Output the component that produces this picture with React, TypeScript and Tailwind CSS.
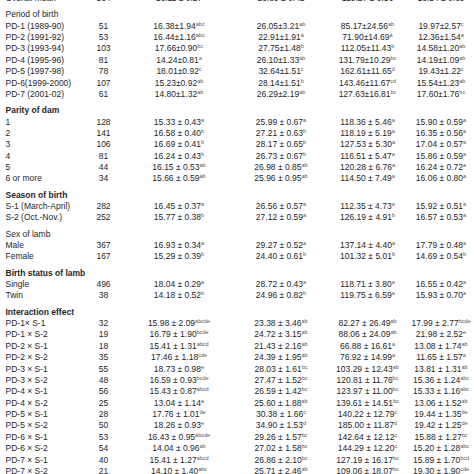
type Cell = [string, string];
type Row = { label: string; n: string; v: Cell[] };
type Section = { title: string; bold: boolean; rows: Row[] };

const r = (label: string, n: string, ...vals: string[]): Row => ({
  label,
  n,
  v: vals.map((s) => {
    const m = s.match(/^(.*?)([a-z]*)$/);
    return [m ? m[1] : s, m ? m[2] : ''] as Cell;
  }),
});

const overall = r('Overall mean', '534', '16.11 ± 0.27', '26.89 ± 0.42', '119.27 ± 3.56', '16.24 ± 0.39');

const sections: Section[] = [
  {
    title: 'Period of birth',
    bold: false,
    rows: [
      r('PD-1 (1989-90)', '51', '16.38±1.94abc', '26.05±3.21ab', '85.17±24.56ab', '19.97±2.57c'),
      r('PD-2 (1991-92)', '53', '16.44±1.16abc', '22.91±1.91a', '71.90±14.69a', '12.36±1.54a'),
      r('PD-3 (1993-94)', '103', '17.66±0.90bc', '27.75±1.48b', '112.05±11.43b', '14.58±1.20ab'),
      r('PD-4 (1995-96)', '81', '14.24±0.81a', '26.10±1.33ab', '131.79±10.29bc', '14.19±1.09ab'),
      r('PD-5 (1997-98)', '78', '18.01±0.92c', '32.64±1.51c', '162.61±11.65d', '19.43±1.22c'),
      r('PD-6(1999-2000)', '107', '15.23±0.92ab', '28.14±1.51b', '143.46±11.67cd', '15.54±1.23ab'),
      r('PD-7 (2001-02)', '61', '14.80±1.32ab', '26.29±2.19ab', '127.63±16.81bc', '17.60±1.76bc'),
    ],
  },
  {
    title: 'Parity of dam',
    bold: true,
    rows: [
      r('1', '128', '15.33 ± 0.43a', '25.99 ± 0.67a', '118.36 ± 5.46a', '15.90 ± 0.59a'),
      r('2', '141', '16.58 ± 0.40b', '27.21 ± 0.63b', '118.19 ± 5.19a', '16.35 ± 0.56a'),
      r('3', '106', '16.69 ± 0.41b', '28.17 ± 0.65b', '127.53 ± 5.30a', '17.04 ± 0.57a'),
      r('4', '81', '16.24 ± 0.43b', '26.73 ± 0.67b', '116.51 ± 5.47a', '15.86 ± 0.59a'),
      r('5', '44', '16.15 ± 0.53ab', '26.98 ± 0.85ab', '120.28 ± 6.76a', '16.24 ± 0.72a'),
      r('6 or more', '34', '15.66 ± 0.59ab', '25.96 ± 0.95ab', '114.50 ± 7.49a', '16.06 ± 0.80a'),
    ],
  },
  {
    title: 'Season of birth',
    bold: true,
    rows: [
      r('S-1 (March-April)', '282', '16.45 ± 0.37a', '26.56 ± 0.57a', '112.35 ± 4.73a', '15.92 ± 0.51a'),
      r('S-2 (Oct.-Nov.)', '252', '15.77 ± 0.38b', '27.12 ± 0.59a', '126.19 ± 4.91b', '16.57 ± 0.53a'),
    ],
  },
  {
    title: 'Sex of lamb',
    bold: false,
    rows: [
      r('Male', '367', '16.93 ± 0.34a', '29.27 ± 0.52a', '137.14 ± 4.40a', '17.79 ± 0.48a'),
      r('Female', '167', '15.29 ± 0.39b', '24.40 ± 0.61b', '101.32 ± 5.01b', '14.69 ± 0.54b'),
    ],
  },
  {
    title: 'Birth status of lamb',
    bold: true,
    rows: [
      r('Single', '496', '18.04 ± 0.29a', '28.72 ± 0.43a', '118.71 ± 3.80a', '16.55 ± 0.42a'),
      r('Twin', '38', '14.18 ± 0.52b', '24.96 ± 0.82b', '119.75 ± 6.59a', '15.93 ± 0.70a'),
    ],
  },
  {
    title: 'Interaction effect',
    bold: true,
    rows: [
      r('PD-1× S-1', '32', '15.98 ± 2.09abcde', '23.38 ± 3.46ab', '82.27 ± 26.49ab', '17.99 ± 2.77bcde'),
      r('PD-1 × S-2', '19', '16.79 ± 1.90bcde', '24.72 ± 3.15ab', '88.06 ± 24.09ab', '21.98 ± 2.52e'),
      r('PD-2 × S-1', '18', '15.41 ± 1.31abcd', '21.43 ± 2.16ab', '66.88 ± 16.61a', '13.08 ± 1.74ab'),
      r('PD-2 × S-2', '35', '17.46 ± 1.18cde', '24.39 ± 1.95ab', '76.92 ± 14.99a', '11.65 ± 1.57a'),
      r('PD-3 × S-1', '55', '18.73 ± 0.98e', '28.03 ± 1.61bc', '103.29 ± 12.43ab', '13.81 ± 1.31ab'),
      r('PD-3 × S-2', '48', '16.59 ± 0.93bcde', '27.47 ± 1.52bc', '120.81 ± 11.76bc', '15.36 ± 1.24abc'),
      r('PD-4 × S-1', '56', '15.43 ± 0.87abcd', '26.59 ± 1.42bc', '123.97 ± 11.00bc', '15.33 ± 1.16abc'),
      r('PD-4 × S-2', '25', '13.04 ± 1.14a', '25.60 ± 1.88ab', '139.61 ± 14.51bc', '13.06 ± 1.52ab'),
      r('PD-5 × S-1', '28', '17.76 ± 1.01de', '30.38 ± 1.66c', '140.22 ± 12.79c', '19.44 ± 1.35de'),
      r('PD-5 × S-2', '50', '18.26 ± 0.93e', '34.90 ± 1.53d', '185.00 ± 11.87d', '19.42 ± 1.25de'),
      r('PD-6 × S-1', '53', '16.43 ± 0.95abcde', '29.26 ± 1.57bc', '142.64 ± 12.12c', '15.88 ± 1.27bc'),
      r('PD-6 × S-2', '54', '14.04 ± 0.96ab', '27.02 ± 1.58bc', '144.29 ± 12.20c', '15.20 ± 1.28abc'),
      r('PD-7 × S-1', '40', '15.41 ± 1.27abcd', '26.86 ± 2.10bc', '127.19 ± 16.17bc', '15.89 ± 1.70bcd'),
      r('PD-7 × S-2', '21', '14.10 ± 1.40abc', '25.71 ± 2.46ab', '109.06 ± 18.07bc', '19.30 ± 1.90cde'),
    ],
  },
];

const grid = 'grid grid-cols-[78.5px_50px_101px_103px_70px_71.5px] h-[11.4px] leading-[11.4px] whitespace-nowrap';

function Value({ cell }: { cell: Cell }) {
  return (
    <span>
      {cell[0]}
      {cell[1] && (
        <span className="relative -top-[3px] text-[5.5px] leading-none text-[#555]">{cell[1]}</span>
      )}
    </span>
  );
}

function DataRow({ row }: { row: Row }) {
  return (
    <div className={grid}>
      <div className="pl-[5.5px]">{row.label}</div>
      <div className="text-center">{row.n}</div>
      <div className="text-center">
        <Value cell={row.v[0]} />
      </div>
      <div className="text-center">
        <Value cell={row.v[1]} />
      </div>
      <div className="text-center">
        <Value cell={row.v[2]} />
      </div>
      <div className="text-center pl-[5.5px]">
        <Value cell={row.v[3]} />
      </div>
    </div>
  );
}

export default function App() {
  return (
    <div className="w-[474px] h-[474px] overflow-hidden bg-white">
      <div
        className="-mt-[7px] text-[8.5px] text-[#262626]"
        style={{ fontFamily: '"Liberation Sans", Arial, sans-serif' }}
      >
        <DataRow row={overall} />
        {sections.map((s) => (
          <div key={s.title}>
            <div className={`${grid} mt-[4.8px] pl-[5.5px] ${s.bold ? 'font-bold' : ''}`}>
              <div className="col-span-6">{s.title}</div>
            </div>
            {s.rows.map((row) => (
              <DataRow key={row.label} row={row} />
            ))}
          </div>
        ))}
      </div>
    </div>
  );
}
